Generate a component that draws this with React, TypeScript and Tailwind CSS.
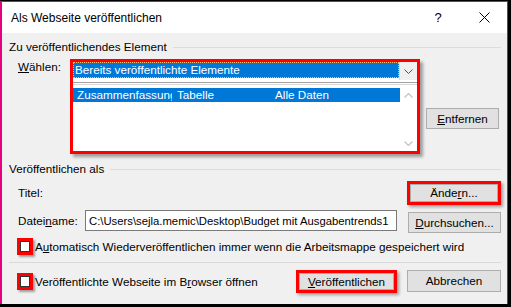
import React from "react";

function Btn({ children, className = "" }: { children: React.ReactNode; className?: string }) {
  return (
    <div
      className={
        "flex items-center justify-center border border-[#adadad] bg-[#e1e1e1] text-black " + className
      }
    >
      {children}
    </div>
  );
}

function Check() {
  return (
    <div className="w-[16px] h-[17px] border-[3px] border-[#ff0000] bg-white shadow-[2px_2px_2px_rgba(0,0,0,0.35)] shrink-0">
      <div className="w-full h-full border border-[#333333] bg-white" />
    </div>
  );
}

export default function App() {
  return (
    <div className="w-[511px] h-[307px] bg-black pt-px pr-[3px] pb-[3px] font-['Liberation_Sans',Arial,sans-serif] text-[11.7px] leading-[16px] text-black">
      <div className="h-full border-t border-l-2 border-r border-[#e6007e] bg-[#f0f0f0] flex flex-col overflow-hidden">
        {/* Title bar */}
        <div className="h-[31px] bg-white flex items-center shrink-0">
          <div className="pl-[9px] text-[12px]">Als Webseite veröffentlichen</div>
          <div className="ml-auto flex h-full">
            <div className="w-[46px] h-full flex items-center justify-center text-[13px]">?</div>
            <div className="w-[46px] h-full flex items-center justify-center">
              <svg width="11" height="11" viewBox="0 0 11 11">
                <path d="M0.5 0.5 L10.5 10.5 M10.5 0.5 L0.5 10.5" stroke="#000" strokeWidth="1" />
              </svg>
            </div>
          </div>
        </div>

        {/* Body */}
        <div className="flex flex-col pl-[7px] pr-[6px] pt-[6px]">
          {/* Group 1 header */}
          <div className="flex items-center h-[16px]">
            <span>Zu veröffentlichendes Element</span>
            <div className="flex-1 h-px bg-[#dcdcdc] ml-[6px]" />
          </div>

          {/* Wählen row */}
          <div className="flex mt-[4px]">
            <div className="ml-[9px] w-[52px]">
              <span className="underline">W</span>ählen:
            </div>
            <div className="w-[350px] h-[95px] border-[3px] border-[#ff0000] shadow-[3px_3px_3px_rgba(0,0,0,0.35)] bg-white flex flex-col">
              {/* Combobox */}
              <div className="h-[18px] flex shrink-0">
                <div className="flex-1 h-[16px] bg-[#0078d7] text-white pl-[1px] border border-dotted border-[#f5c07a] leading-[14px]">
                  Bereits veröffentlichte Elemente
                </div>
                <div className="w-[18px] h-[18px] bg-[#f0f0f0] border-l border-[#dadada] flex items-center justify-center">
                  <svg width="9" height="5" viewBox="0 0 9 5">
                    <path d="M0.5 0.5 L4.5 4.5 L8.5 0.5" stroke="#505050" fill="none" strokeWidth="1" />
                  </svg>
                </div>
              </div>
              <div className="h-px bg-[#a0a0a0] mt-[2px]" />
              {/* List */}
              <div className="flex-1 flex mt-px border-t border-[#d6d6d6]">
                <div className="flex-1 pt-[3px]">
                  <div className="h-[14px] bg-[#0078d7] text-white flex leading-[14px] whitespace-nowrap">
                    <div className="w-[104px] pl-[4px] shrink-0">
                      <div className="w-[95px] overflow-hidden">Zusammenfassung</div>
                    </div>
                    <div className="w-[98px] shrink-0">Tabelle</div>
                    <div>Alle Daten</div>
                  </div>
                </div>
                <div className="w-[17px] flex flex-col justify-between items-center pt-[8px] pb-[5px] bg-white">
                  <svg width="9" height="5" viewBox="0 0 9 5">
                    <path d="M0.5 4.5 L4.5 0.5 L8.5 4.5" stroke="#c2c2c2" fill="none" strokeWidth="1.2" />
                  </svg>
                  <svg width="9" height="5" viewBox="0 0 9 5">
                    <path d="M0.5 0.5 L4.5 4.5 L8.5 0.5" stroke="#c2c2c2" fill="none" strokeWidth="1.2" />
                  </svg>
                </div>
              </div>
            </div>
            <Btn className="ml-[6px] mt-[49px] w-[73px] h-[21px]">
              <span>
                <span className="underline">E</span>ntfernen
              </span>
            </Btn>
          </div>

          {/* Group 2 header */}
          <div className="flex items-center h-[16px] mt-[7px]">
            <span>Veröffentlichen als</span>
            <div className="flex-1 h-px bg-[#dcdcdc] ml-[6px]" />
          </div>

          {/* Titel row */}
          <div className="flex items-center mt-[4px] h-[24px]">
            <div className="ml-[9px]">Titel:</div>
            <div className="ml-auto w-[94px] h-[24px] border-[3px] border-[#ff0000] shadow-[2px_2px_3px_rgba(0,0,0,0.35)]">
              <Btn className="w-full h-full">
                <span>
                  Ände<span className="underline">r</span>n...
                </span>
              </Btn>
            </div>
          </div>

          {/* Dateiname row */}
          <div className="flex items-start mt-[5px]">
            <div className="ml-[9px] w-[67px] h-[21px] flex items-center">
              Datei<span className="underline">n</span>ame:
            </div>
            <div className="w-[312px] h-[21px] border border-[#7a7a7a] bg-white pl-[3px] flex items-center whitespace-nowrap overflow-hidden text-[11.3px]">
              C:\Users\sejla.memic\Desktop\Budget mit Ausgabentrends1
            </div>
            <Btn className="ml-auto mt-[2px] w-[93px] h-[21px]">
              <span>
                <span className="underline">D</span>urchsuchen...
              </span>
            </Btn>
          </div>

          {/* Checkbox 1 */}
          <div className="flex items-center mt-[5px] h-[17px]">
            <div className="ml-[8px]">
              <Check />
            </div>
            <div className="ml-[2px] whitespace-nowrap">
              A<span className="underline">u</span>tomatisch Wiederveröffentlichen immer wenn die Arbeitsmappe gespeichert wird
            </div>
          </div>

          {/* Separator */}
          <div className="h-px bg-[#d9d9d9] mt-[7px]" />

          {/* Bottom row */}
          <div className="flex items-start mt-[7px]">
            <div className="ml-[8px] mt-[3px]">
              <Check />
            </div>
            <div className="ml-[2px] mt-[4px] whitespace-nowrap">
              Veröffentlichte Webseite im B<span className="underline">r</span>owser öffnen
            </div>
            <div className="ml-auto w-[101px] h-[23px] border-[3px] border-[#ff0000] shadow-[2px_2px_3px_rgba(0,0,0,0.35)]">
              <Btn className="w-full h-full">
                <span>
                  <span className="underline">V</span>eröffentlichen
                </span>
              </Btn>
            </div>
            <Btn className="ml-[10px] w-[94px] h-[22px]">Abbrechen</Btn>
          </div>
        </div>
      </div>
    </div>
  );
}
